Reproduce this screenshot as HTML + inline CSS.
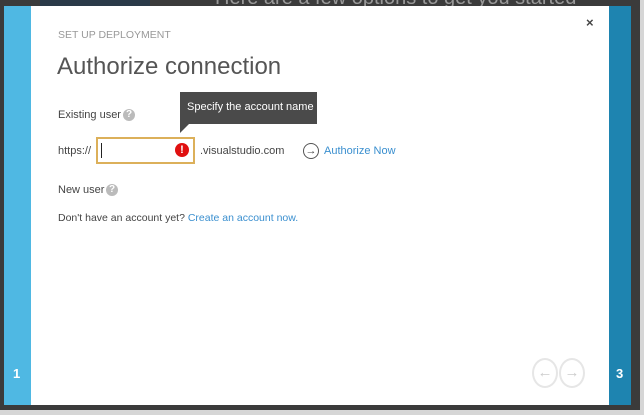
<!DOCTYPE html><html><head><style>
body{margin:0;width:644px;height:415px;overflow:hidden;background:#d6d6d6;font-family:"Liberation Sans",sans-serif;position:relative}
div{position:absolute}
.t{white-space:nowrap}
</style></head><body>
<div style="left:0;top:0;width:640px;height:410px;background:#3b3b3b"></div>
<div style="left:40px;top:0;width:110px;height:6px;background:#2a3a48"></div>
<div class="t" style="left:215px;top:-13px;font-size:20px;color:#999">Here are a few options to get you started</div>
<div style="left:4px;top:6px;width:27px;height:399px;background:#4fb8e3"></div>
<div style="left:31px;top:6px;width:578px;height:399px;background:#fff"></div>
<div style="left:609px;top:6px;width:22px;height:399px;background:#1e84b0"></div>
<div class="t" style="left:13px;top:366px;color:#fff;font-weight:bold;font-size:13px">1</div>
<div class="t" style="left:616px;top:366px;color:#fff;font-weight:bold;font-size:13px">3</div>
<div class="t" style="left:586px;top:15px;color:#444;font-weight:bold;font-size:13px">×</div>
<div class="t" style="left:58px;top:29px;color:#999;font-size:10.5px">SET UP DEPLOYMENT</div>
<div class="t" style="left:57px;top:53px;color:#555;font-size:24px">Authorize connection</div>
<div class="t" style="left:58px;top:109px;color:#444;font-size:11px">Existing user</div>
<div style="left:123px;top:109px;width:12px;height:12px;border-radius:50%;background:#bbb;color:#fff;font-size:10px;font-weight:bold;text-align:center;line-height:12px">?</div>
<div style="left:180px;top:92px;width:137px;height:32px;background:#4a4a4a"></div>
<div class="t" style="left:187px;top:101px;color:#fff;font-size:11px">Specify the account name</div>
<div style="left:180px;top:124px;width:0;height:0;border-left:9px solid #4a4a4a;border-right:9px solid transparent;border-bottom:9px solid transparent"></div>
<div class="t" style="left:58px;top:145px;color:#444;font-size:11px">https://</div>
<div style="left:96px;top:137px;width:95px;height:23px;border:2px solid #dcb05a;background:#fff"></div>
<div style="left:101px;top:143px;width:1px;height:15px;background:#222"></div>
<div style="left:175px;top:143px;width:14px;height:14px;border-radius:50%;background:#e01010;color:#fff;font-size:11px;font-weight:bold;text-align:center;line-height:14px">!</div>
<div class="t" style="left:200px;top:145px;color:#444;font-size:11px">.visualstudio.com</div>
<div style="left:303px;top:143px;width:14px;height:14px;border:1.5px solid #555;border-radius:50%;color:#444;font-size:11px;font-weight:bold;text-align:center;line-height:14px">→</div>
<div class="t" style="left:324px;top:145px;color:#3a8fcf;font-size:11px">Authorize Now</div>
<div class="t" style="left:58px;top:184px;color:#444;font-size:11px">New user</div>
<div style="left:106px;top:184px;width:12px;height:12px;border-radius:50%;background:#bbb;color:#fff;font-size:10px;font-weight:bold;text-align:center;line-height:12px">?</div>
<div class="t" style="left:58px;top:212px;color:#444;font-size:10.5px">Don't have an account yet? <span style="color:#3a8fcf">Create an account now.</span></div>
<div style="left:532px;top:358px;width:22px;height:26px;border:2px solid #e6e6e6;border-radius:50%;color:#ccc;font-size:15px;font-weight:bold;text-align:center;line-height:26px">←</div>
<div style="left:559px;top:358px;width:22px;height:26px;border:2px solid #e6e6e6;border-radius:50%;color:#ccc;font-size:15px;font-weight:bold;text-align:center;line-height:26px">→</div>
</body></html>
